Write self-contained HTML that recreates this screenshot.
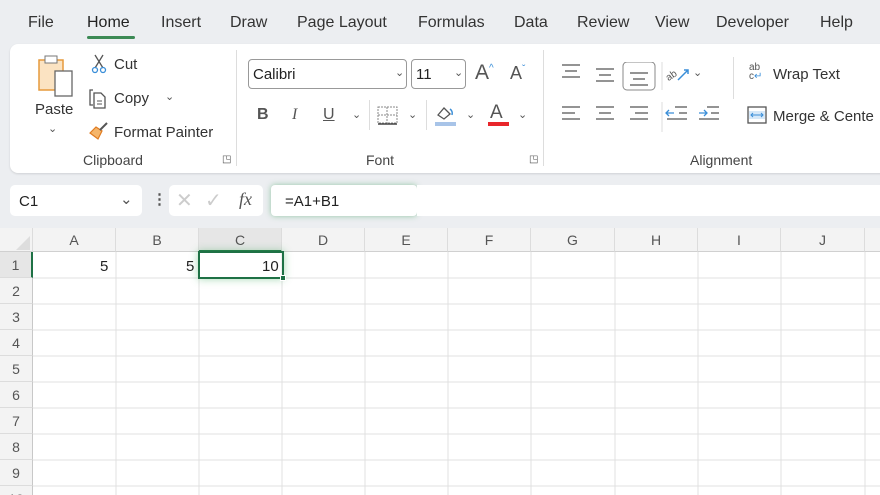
<!DOCTYPE html>
<html><head><meta charset="utf-8"><style>
*{box-sizing:border-box;margin:0;padding:0}
html,body{width:880px;height:495px;overflow:hidden}
body{background:#eceef1;font-family:"Liberation Sans",sans-serif;color:#333;position:relative}
.a{position:absolute;white-space:nowrap}
.tab{top:14px;font-size:16px;color:#333}
.rib{left:10px;top:44px;width:900px;height:129px;background:#fff;border-radius:8px;box-shadow:0 1px 2px rgba(0,0,0,.12)}
.t14{font-size:15px;color:#333}
.lbl{font-size:14px;color:#444;top:152px}
.sep{width:1px;background:#ddd}
.chev{font-size:11px;color:#555}
.box{border:1px solid #999;border-radius:4px;background:#fff}
.grid{left:0;top:228px;width:880px;height:267px;background:#fff;overflow:hidden}
.ch{top:0;height:24px;background:#f3f3f3;border-right:1px solid #dcdcdc;border-bottom:1px solid #d0d0d0;text-align:center;font-size:14px;line-height:24px;color:#555}
.rh{left:0;width:33px;height:26px;background:#f3f3f3;border-right:1px solid #c8c8c8;border-bottom:1px solid #dcdcdc;text-align:center;font-size:14px;line-height:26px;color:#555}
</style></head><body>
<div class="a tab" style="left:28px">File</div>
<div class="a tab" style="left:87px;color:#222">Home</div>
<div class="a" style="left:87px;top:36px;width:48px;height:3px;background:#3c8a55;border-radius:2px"></div>
<div class="a tab" style="left:161px">Insert</div>
<div class="a tab" style="left:230px">Draw</div>
<div class="a tab" style="left:297px">Page Layout</div>
<div class="a tab" style="left:418px">Formulas</div>
<div class="a tab" style="left:514px">Data</div>
<div class="a tab" style="left:577px">Review</div>
<div class="a tab" style="left:655px">View</div>
<div class="a tab" style="left:716px">Developer</div>
<div class="a tab" style="left:820px">Help</div>

<div class="a rib"></div>
<svg class="a" style="left:36px;top:54px" width="40" height="44"><rect x="3" y="6" width="24" height="30" fill="#fbe3c2" stroke="#e69a3c" stroke-width="1.5"/><rect x="9" y="2" width="12" height="7" fill="#fff" stroke="#777"/><rect x="19" y="17" width="17" height="25" fill="#fff" stroke="#666" stroke-width="1.3"/></svg>
<div class="a t14" style="left:35px;top:101px">Paste</div>
<div class="a chev" style="left:48px;top:122px">⌄</div>
<svg class="a" style="left:90px;top:54px" width="18" height="20"><path d="M5 1 L13 14 M13 1 L5 14" stroke="#555" stroke-width="1.3" fill="none"/><circle cx="5" cy="16" r="2.5" fill="none" stroke="#3a8ed8" stroke-width="1.3"/><circle cx="13" cy="16" r="2.5" fill="none" stroke="#3a8ed8" stroke-width="1.3"/></svg>
<div class="a t14" style="left:114px;top:56px">Cut</div>
<svg class="a" style="left:88px;top:88px" width="20" height="22"><path d="M5 2 H2 V17 H5" stroke="#555" fill="none" stroke-width="1.3"/><path d="M6 5 H13 L17 9 V20 H6 Z" stroke="#555" fill="#fff" stroke-width="1.3"/><path d="M9 13 H14 M9 16 H14" stroke="#555"/></svg>
<div class="a t14" style="left:114px;top:90px">Copy</div>
<div class="a chev" style="left:165px;top:90px">⌄</div>
<svg class="a" style="left:88px;top:121px" width="22" height="20"><path d="M2 12 L10 18 L14 10 L8 6 Z" fill="#f5b56a" stroke="#e07b20" stroke-width="1.2"/><path d="M12 9 L19 2" stroke="#555" stroke-width="2"/></svg>
<div class="a t14" style="left:114px;top:124px">Format Painter</div>
<div class="a lbl" style="left:83px">Clipboard</div>
<div class="a" style="left:222px;top:154px;font-size:10px;color:#555">◳</div>
<div class="a sep" style="left:236px;top:50px;height:116px"></div>
<div class="a box" style="left:248px;top:59px;width:159px;height:30px"></div>
<div class="a" style="left:253px;top:66px;font-size:15px;color:#222">Calibri</div>
<div class="a chev" style="left:395px;top:66px">⌄</div>
<div class="a box" style="left:411px;top:59px;width:55px;height:30px"></div>
<div class="a" style="left:416px;top:66px;font-size:15px;color:#222">11</div>
<div class="a chev" style="left:454px;top:66px">⌄</div>
<div class="a" style="left:475px;top:61px;font-size:21px;color:#555">A<sup style="font-size:10px;color:#3a8ed8">^</sup></div>
<div class="a" style="left:510px;top:63px;font-size:18px;color:#555">A<sup style="font-size:10px;color:#3a8ed8">ˇ</sup></div>
<div class="a" style="left:257px;top:106px;font-size:16px;font-weight:bold;color:#555">B</div>
<div class="a" style="left:292px;top:106px;font-size:16px;font-style:italic;font-family:'Liberation Serif',serif;color:#555">I</div>
<div class="a" style="left:323px;top:106px;font-size:16px;text-decoration:underline;color:#555">U</div>
<div class="a chev" style="left:352px;top:108px">⌄</div>
<div class="a sep" style="left:369px;top:100px;height:30px"></div>
<svg class="a" style="left:377px;top:106px" width="22" height="20"><rect x="1" y="1" width="19" height="16" fill="none" stroke="#888" stroke-dasharray="2 1"/><path d="M10 1 V17 M1 9 H20" stroke="#888" stroke-dasharray="2 1"/><path d="M1 18 H20" stroke="#444" stroke-width="1.5"/></svg>
<div class="a chev" style="left:408px;top:108px">⌄</div>
<div class="a sep" style="left:426px;top:100px;height:30px"></div>
<svg class="a" style="left:434px;top:103px" width="24" height="24"><path d="M4 12 L10 5 L16 11 L10 16 Z" fill="none" stroke="#555" stroke-width="1.3"/><path d="M16 6 Q19 8 18 12" stroke="#3a8ed8" fill="none" stroke-width="1.5"/><rect x="1" y="19" width="21" height="4" fill="#a8c4e8"/></svg>
<div class="a chev" style="left:466px;top:108px">⌄</div>
<div class="a" style="left:490px;top:102px;font-size:19px;color:#555">A</div>
<div class="a" style="left:488px;top:122px;width:21px;height:4px;background:#e8262b"></div>
<div class="a chev" style="left:518px;top:108px">⌄</div>
<div class="a lbl" style="left:366px">Font</div>
<div class="a" style="left:529px;top:154px;font-size:10px;color:#555">◳</div>
<div class="a sep" style="left:543px;top:50px;height:116px"></div>
<svg class="a" style="left:560px;top:62px" width="160" height="70">
<g stroke="#555" stroke-width="1.3">
<path d="M2 3H20M5 9H17M2 15H20"/>
<path d="M36 7H54M39 13H51M36 19H54"/>
<path d="M70 11H88M73 17H85M70 23H88"/>
<path d="M2 45H20M2 51H15M2 57H20"/>
<path d="M36 45H54M39 51H51M36 57H54"/>
<path d="M70 45H88M75 51H88M70 57H88"/>
<path d="M115 45H127M119 51H127M107 57H127"/>
<path d="M147 45H159M151 51H159M139 57H159"/>
</g>
<rect x="63" y="0" width="32" height="28" rx="4" fill="none" stroke="#888"/>
<path d="M106 51H114M109 48L106 51L109 54" stroke="#3a8ed8" fill="none" stroke-width="1.3"/>
<path d="M139 51H147M144 48L147 51L144 54" stroke="#3a8ed8" fill="none" stroke-width="1.3"/>
<path d="M102 0V28M102 40V70" stroke="#ddd"/>
<path d="M118 18L128 8M124 8H128V12" stroke="#3a8ed8" fill="none" stroke-width="1.5"/>
<text x="105" y="16" font-size="10" fill="#555" transform="rotate(-35 112 12)" font-family="Liberation Sans">ab</text>
</svg>
<div class="a chev" style="left:693px;top:66px">⌄</div>
<div class="a sep" style="left:733px;top:57px;height:42px"></div>
<div class="a" style="left:749px;top:63px;font-size:10px;line-height:9px;color:#555">ab<br>c<span style="color:#3a8ed8">↵</span></div>
<div class="a t14" style="left:773px;top:66px">Wrap Text</div>
<svg class="a" style="left:747px;top:105px" width="20" height="20"><rect x="1" y="2" width="18" height="16" fill="#fff" stroke="#555" stroke-width="1.3"/><rect x="2" y="6" width="16" height="8" fill="#d6e8f8"/><path d="M4 10H16M6 8L4 10L6 12M14 8L16 10L14 12" stroke="#3a8ed8" fill="none"/></svg>
<div class="a t14" style="left:773px;top:108px">Merge &amp; Cente</div>
<div class="a lbl" style="left:690px">Alignment</div>

<div class="a" style="left:10px;top:185px;width:132px;height:31px;background:#fff;border-radius:5px"></div>
<div class="a" style="left:19px;top:193px;font-size:15px;color:#222">C1</div>
<div class="a" style="left:120px;top:190px;font-size:15px;color:#555">⌄</div>
<div class="a" style="left:152px;top:190px;font-size:15px;color:#555;font-weight:bold">⋮</div>
<div class="a" style="left:169px;top:185px;width:94px;height:31px;background:#fff;border-radius:5px"></div>
<div class="a" style="left:176px;top:188px;font-size:20px;color:#ccc">✕</div>
<div class="a" style="left:205px;top:188px;font-size:20px;color:#ccc">✓</div>
<div class="a" style="left:239px;top:189px;font-size:18px;font-style:italic;font-family:'Liberation Serif',serif;color:#555">fx</div>
<div class="a" style="left:271px;top:185px;width:146px;height:31px;background:#fff;border-radius:4px;box-shadow:0 0 6px rgba(60,160,90,.5)"></div>
<div class="a" style="left:417px;top:185px;width:470px;height:31px;background:#fff"></div>
<div class="a" style="left:285px;top:193px;font-size:15px;color:#222">=A1+B1</div>

<div class="a grid">
<svg class="a" style="left:0;top:0" width="880" height="267">
<g stroke="#e1e1e1">
<path d="M0 50H880M0 76H880M0 102H880M0 128H880M0 154H880M0 180H880M0 206H880M0 232H880M0 258H880"/>
<path d="M116 24V267M199 24V267M282 24V267M365 24V267M448 24V267M531 24V267M615 24V267M698 24V267M781 24V267M865 24V267"/>
</g></svg>
<div class="a" style="left:0;top:0;width:33px;height:24px;background:#f3f3f3;border-right:1px solid #dcdcdc;border-bottom:1px solid #d0d0d0"></div>
<svg class="a" style="left:16px;top:8px" width="14" height="14"><path d="M14 0V14H0Z" fill="#ddd"/></svg>
<div class="a ch" style="left:33px;width:83px">A</div>
<div class="a ch" style="left:116px;width:83px">B</div>
<div class="a ch" style="left:199px;width:83px;background:#e6e6e6;border-bottom:2px solid #1e7145">C</div>
<div class="a ch" style="left:282px;width:83px">D</div>
<div class="a ch" style="left:365px;width:83px">E</div>
<div class="a ch" style="left:448px;width:83px">F</div>
<div class="a ch" style="left:531px;width:84px">G</div>
<div class="a ch" style="left:615px;width:83px">H</div>
<div class="a ch" style="left:698px;width:83px">I</div>
<div class="a ch" style="left:781px;width:84px">J</div>
<div class="a ch" style="left:865px;width:20px"></div>
<div class="a rh" style="top:24px;background:#e6e6e6;border-right:2px solid #1e7145">1</div>
<div class="a rh" style="top:50px">2</div>
<div class="a rh" style="top:76px">3</div>
<div class="a rh" style="top:102px">4</div>
<div class="a rh" style="top:128px">5</div>
<div class="a rh" style="top:154px">6</div>
<div class="a rh" style="top:180px">7</div>
<div class="a rh" style="top:206px">8</div>
<div class="a rh" style="top:232px">9</div>
<div class="a rh" style="top:258px">10</div>
<div class="a" style="left:100px;top:30px;font-size:15px;color:#222">5</div>
<div class="a" style="left:186px;top:30px;font-size:15px;color:#222">5</div>
<div class="a" style="left:198px;top:23px;width:86px;height:28px;border:2px solid #1e7145;box-shadow:0 0 8px rgba(60,170,90,.45)"></div>
<div class="a" style="left:262px;top:30px;font-size:15px;color:#222">10</div>
<div class="a" style="left:280px;top:47px;width:6px;height:6px;background:#1e7145;border:1px solid #fff"></div>
</div>
</body></html>
